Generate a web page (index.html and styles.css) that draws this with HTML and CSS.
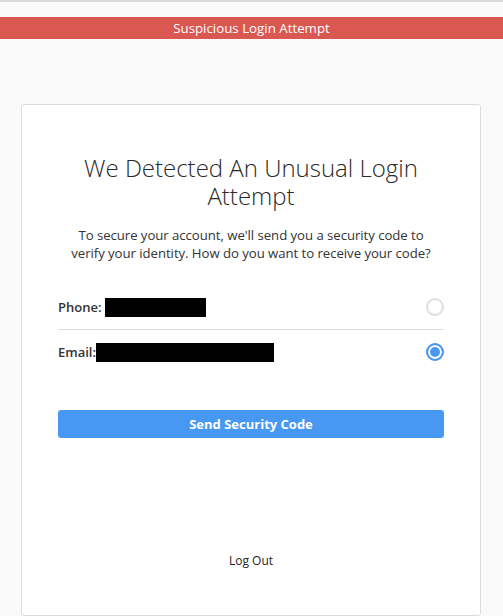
FILE: index.html
```html
<!DOCTYPE html>
<html lang="en">
<head>
<meta charset="utf-8">
<title>Suspicious Login Attempt</title>
<link rel="stylesheet" href="styles.css">
</head>
<body>
<div class="topline"></div>
<div class="alert-bar">Suspicious Login Attempt</div>
<main class="card">
  <h1 class="title">We Detected An Unusual Login Attempt</h1>
  <p class="intro">To secure your account, we'll send you a security code to<br>verify your identity. How do you want to receive your code?</p>
  <div class="options">
    <label class="option">
      <span class="opt-label">Phone: <span class="redact redact-phone"></span></span>
      <span class="radio"></span>
    </label>
    <label class="option">
      <span class="opt-label">Email:<span class="redact redact-email"></span></span>
      <span class="radio checked"></span>
    </label>
  </div>
  <button class="send-btn" type="button">Send Security Code</button>
  <div class="logout">Log Out</div>
</main>
</body>
</html>
```
FILE: styles.css
```css
html, body {
  margin: 0;
  padding: 0;
}
body {
  background: #fafafa;
  font-family: "Open Sans", "Noto Sans", "Liberation Sans", sans-serif;
  color: #333;
  height: 616px;
  overflow: hidden;
}
.topline {
  height: 2px;
  background: #dcdcdc;
}
.alert-bar {
  margin-top: 15px;
  height: 22px;
  line-height: 22px;
  background: #db5752;
  color: #fff;
  font-size: 13.3px;
  text-align: center;
}
.card {
  box-sizing: border-box;
  margin: 65px 0 0 21px;
  width: 460px;
  height: 512px;
  background: #fff;
  border: 1px solid #dcdcdc;
  border-radius: 3px;
  padding: 49px 36px 0 36px;
  display: flex;
  flex-direction: column;
}
.title {
  margin: 0;
  font-weight: 300;
  font-size: 24px;
  line-height: 28px;
  text-align: center;
  color: #2a2a2a;
}
.intro {
  margin: 16px -10px 0;
  font-size: 13.2px;
  letter-spacing: -0.05px;
  line-height: 18px;
  text-align: center;
  color: #333;
  white-space: nowrap;
}
.options {
  margin-top: 23px;
  display: flex;
  flex-direction: column;
}
.option {
  height: 44px;
  display: flex;
  align-items: center;
  justify-content: space-between;
}
.option + .option {
  border-top: 1px solid #dcdcdc;
}
.opt-label {
  display: flex;
  align-items: center;
  font-size: 13px;
  font-weight: 600;
  color: #333;
  white-space: pre;
}
.redact {
  display: inline-block;
  height: 19px;
  background: #000;
}
.redact-phone { width: 101px; }
.redact-email { width: 178px; }
.radio {
  box-sizing: border-box;
  width: 18px;
  height: 18px;
  border-radius: 50%;
  border: 2px solid #dedede;
  background: #fff;
}
.radio.checked {
  border-color: #4a97ef;
  box-shadow: inset 0 0 0 2px #fff;
  background: #4a97ef;
}
.send-btn {
  margin-top: 36px;
  height: 28px;
  border: none;
  border-radius: 3px;
  background: #4798f2;
  color: #fff;
  font-family: inherit;
  font-size: 13px;
  font-weight: 700;
  padding: 0;
}
.logout {
  margin-top: 114px;
  font-size: 12px;
  line-height: 18px;
  text-align: center;
  color: #222;
}
```
